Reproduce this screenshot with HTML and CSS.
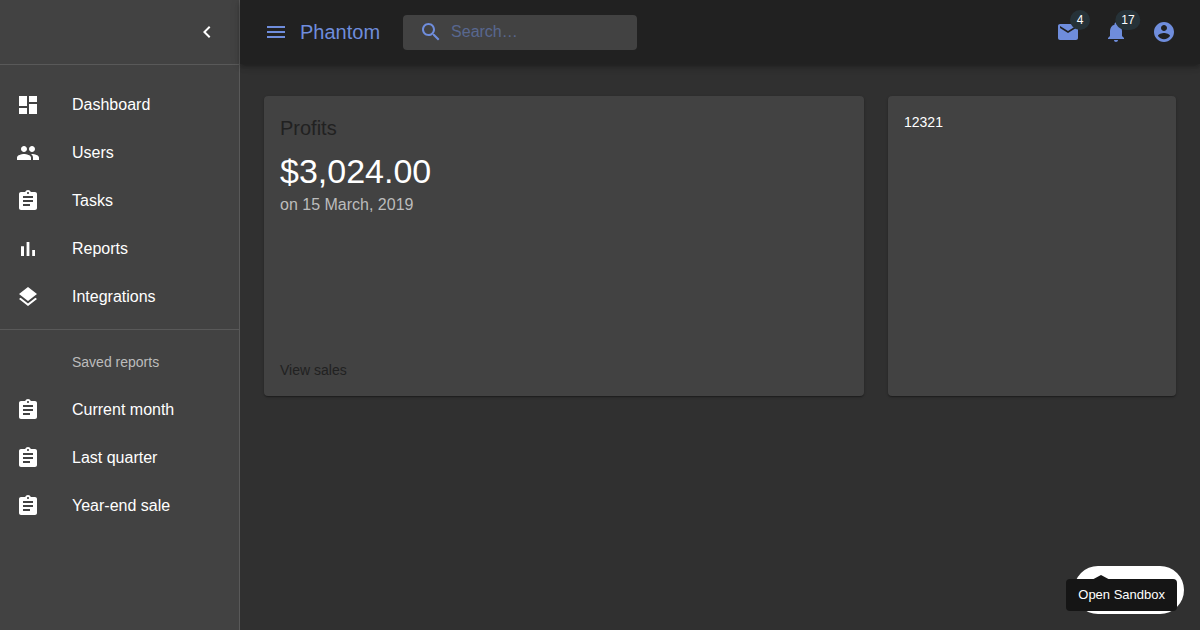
FILE: index.html
```
<!DOCTYPE html>
<html lang="en">
<head>
    <meta charset="UTF-8">
    <meta name="viewport" content="width=device-width, initial-scale=1">
    <title>Phantom</title>
    <link rel="stylesheet" href="styles.css">
</head>
<body>
    <!-- Shared icons -->
    <svg class="sprite" aria-hidden="true">
        <symbol id="assignment" viewBox="0 0 24 24">
            <path d="M19 3h-4.180C14.400 1.840 13.300 1 12 1c-1.300 0-2.400.840-2.820 2H5c-1.100 0-2 .900-2 2v14c0 1.100.900 2 2 2h14c1.100 0 2-.900 2-2V5c0-1.100-.900-2-2-2zm-7 0c.550 0 1 .450 1 1s-.450 1-1 1-1-.450-1-1 .450-1 1-1zm2 14H7v-2h7v2zm3-4H7v-2h10v2zm0-4H7V7h10v2z"/>
        </symbol>
    </svg>

    <div class="layout">
        <aside class="sidebar">
            <div class="sidebar-header">
                <button class="icon-button" type="button" aria-label="Close menu">
                    <svg class="icon" viewBox="0 0 24 24"><path d="M15.410 7.410L14 6l-6 6 6 6 1.410-1.410L10.830 12z"/></svg>
                </button>
            </div>
            <nav class="menu">
                <a class="menu-item" href="#">
                    <svg class="icon" viewBox="0 0 24 24"><path d="M3 13h8V3H3v10zm0 8h8v-6H3v6zm10 0h8V11h-8v10zm0-18v6h8V3h-8z"/></svg>
                    <span>Dashboard</span>
                </a>
                <a class="menu-item" href="#">
                    <svg class="icon" viewBox="0 0 24 24"><path d="M16 11c1.660 0 2.990-1.340 2.990-3S17.660 5 16 5c-1.660 0-3 1.340-3 3s1.340 3 3 3zm-8 0c1.660 0 2.990-1.340 2.990-3S9.660 5 8 5C6.340 5 5 6.340 5 8s1.340 3 3 3zm0 2c-2.330 0-7 1.170-7 3.500V19h14v-2.500c0-2.330-4.670-3.500-7-3.500zm8 0c-.290 0-.620.020-.970.050 1.160.840 1.970 1.970 1.970 3.450V19h6v-2.500c0-2.330-4.670-3.500-7-3.500z"/></svg>
                    <span>Users</span>
                </a>
                <a class="menu-item" href="#">
                    <svg class="icon"><use href="#assignment"/></svg>
                    <span>Tasks</span>
                </a>
                <a class="menu-item" href="#">
                    <svg class="icon" viewBox="0 0 24 24"><path d="M5 9.200h3V19H5zM10.600 5h2.800v14h-2.800zm5.600 8H19v6h-2.800z"/></svg>
                    <span>Reports</span>
                </a>
                <a class="menu-item" href="#">
                    <svg class="icon" viewBox="0 0 24 24"><path d="M11.990 18.540l-7.370-5.730L3 14.070l9 7 9-7-1.630-1.270-7.380 5.740zM12 16l7.360-5.730L21 9l-9-7-9 7 1.630 1.270L12 16z"/></svg>
                    <span>Integrations</span>
                </a>
            </nav>
            <nav class="menu menu-saved">
                <h2 class="menu-title">Saved reports</h2>
                <a class="menu-item" href="#">
                    <svg class="icon"><use href="#assignment"/></svg>
                    <span>Current month</span>
                </a>
                <a class="menu-item" href="#">
                    <svg class="icon"><use href="#assignment"/></svg>
                    <span>Last quarter</span>
                </a>
                <a class="menu-item" href="#">
                    <svg class="icon"><use href="#assignment"/></svg>
                    <span>Year-end sale</span>
                </a>
            </nav>
        </aside>

        <div class="page">
            <header class="topbar">
                <button class="icon-button" type="button" aria-label="Open menu">
                    <svg class="icon" viewBox="0 0 24 24"><path d="M3 18h18v-2H3v2zm0-5h18v-2H3v2zm0-7v2h18V6H3z"/></svg>
                </button>
                <h1 class="brand">Phantom</h1>
                <label class="search">
                    <svg class="icon" viewBox="0 0 24 24"><path d="M15.500 14h-.790l-.280-.270C15.410 12.590 16 11.110 16 9.500 16 5.910 13.090 3 9.500 3S3 5.910 3 9.500 5.910 16 9.500 16c1.610 0 3.090-.590 4.230-1.570l.270.280v.790l5 4.990L20.490 19l-4.990-5zm-6 0C7.010 14 5 11.990 5 9.500S7.010 5 9.500 5 14 7.010 14 9.500 11.990 14 9.500 14z"/></svg>
                    <input class="search-input" type="text" placeholder="Search…" aria-label="Search">
                </label>
                <div class="actions">
                    <button class="icon-button" type="button" aria-label="4 new mails">
                        <svg class="icon" viewBox="0 0 24 24"><path d="M20 4H4c-1.100 0-1.990.900-1.990 2L2 18c0 1.100.900 2 2 2h16c1.100 0 2-.900 2-2V6c0-1.100-.900-2-2-2zm0 4l-8 5-8-5V6l8 5 8-5v2z"/></svg>
                        <span class="badge">4</span>
                    </button>
                    <button class="icon-button" type="button" aria-label="17 new notifications">
                        <svg class="icon" viewBox="0 0 24 24"><path d="M12 22c1.100 0 2-.900 2-2h-4c0 1.100.890 2 2 2zm6-6v-5c0-3.070-1.640-5.640-4.500-6.320V4c0-.830-.670-1.500-1.500-1.500s-1.500.670-1.500 1.500v.680C7.630 5.360 6 7.920 6 11v5l-2 2v1h16v-1l-2-2z"/></svg>
                        <span class="badge">17</span>
                    </button>
                    <button class="icon-button" type="button" aria-label="Account">
                        <svg class="icon" viewBox="0 0 24 24"><path d="M12 2C6.480 2 2 6.480 2 12s4.480 10 10 10 10-4.480 10-10S17.520 2 12 2zm0 3c1.660 0 3 1.340 3 3s-1.340 3-3 3-3-1.340-3-3 1.340-3 3-3zm0 14.200c-2.500 0-4.710-1.280-6-3.220.030-1.990 4-3.080 6-3.080 1.990 0 5.970 1.090 6 3.080-1.290 1.940-3.500 3.220-6 3.220z"/></svg>
                    </button>
                </div>
            </header>

            <main class="content">
                <section class="card card-wide">
                    <h2 class="card-title">Profits</h2>
                    <p class="amount">$3,024.00</p>
                    <p class="date">on 15 March, 2019</p>
                    <a class="card-link" href="#">View sales</a>
                </section>
                <section class="card card-narrow">12321</section>
            </main>
        </div>
    </div>

    <div class="sandbox">
        <button class="sandbox-button" type="button" aria-describedby="sandbox-tip" aria-label="Open Sandbox">
            <svg class="sandbox-logo" viewBox="0 0 26 30"><path d="M13 0l13 7v16l-13 7-13-7V7zm0 5L5 9l8 5 8-5zM3 12v9l8 5v-9zm20 0l-8 5v9l8-5z"/></svg>
        </button>
        <div class="tooltip" id="sandbox-tip" role="tooltip">Open Sandbox</div>
    </div>
</body>
</html>
```
FILE: styles.css
```
* {
    box-sizing: border-box;
}

body {
    margin: 0;
    background: #303030;
    color: #fff;
    font-family: "Liberation Sans", Arial, sans-serif;
    font-size: 14px;
    line-height: 20px;
}

h1, h2, p {
    margin: 0;
    font-weight: normal;
}

a {
    color: inherit;
    text-decoration: none;
}

.sprite {
    display: none;
}

.icon {
    display: block;
    flex: none;
    width: 24px;
    height: 24px;
    fill: currentColor;
}

.icon-button {
    position: relative;
    padding: 12px;
    border: 0;
    background: none;
    color: inherit;
    font: inherit;
    cursor: pointer;
}

.layout {
    display: flex;
    min-height: 100vh;
}

/* Sidebar */
.sidebar {
    flex: none;
    width: 240px;
    background: #424242;
    border-right: 1px solid #595959;
}

.sidebar-header {
    display: flex;
    align-items: center;
    justify-content: flex-end;
    height: 65px;
    padding: 0 8px;
    border-bottom: 1px solid #595959;
}

.menu {
    padding: 16px 0 8px;
}

.menu-saved {
    padding-top: 8px;
    border-top: 1px solid #595959;
}

.menu-item {
    display: flex;
    align-items: center;
    gap: 32px;
    height: 48px;
    padding: 0 16px;
    font-size: 16px;
}

.menu-title {
    padding-left: 72px;
    color: #bcbcbc;
    font-size: 14px;
    line-height: 48px;
}

/* Top bar */
.page {
    flex: 1;
    min-width: 0;
}

.topbar {
    position: relative;
    display: flex;
    align-items: center;
    height: 64px;
    padding: 0 12px;
    background: #212121;
    color: #6f8ddc;
    box-shadow: 0 2px 4px -1px rgba(0, 0, 0, 0.2), 0 4px 5px rgba(0, 0, 0, 0.14), 0 1px 10px rgba(0, 0, 0, 0.12);
}

.brand {
    font-size: 20px;
    line-height: 32px;
}

.search {
    display: flex;
    align-items: center;
    gap: 8px;
    width: 234px;
    height: 35px;
    margin-left: 23px;
    padding: 0 16px;
    border-radius: 4px;
    background: #424242;
}

.search-input {
    flex: 1;
    min-width: 0;
    padding: 0;
    border: 0;
    outline: 0;
    background: none;
    color: inherit;
    font: inherit;
    font-size: 16px;
}

.search-input::placeholder {
    color: #6f8ddc;
    opacity: 0.5;
}

.actions {
    display: flex;
    margin-left: auto;
}

/* Centered on the top right corner of the icon */
.badge {
    position: absolute;
    top: 12px;
    left: 36px;
    min-width: 20px;
    padding: 0 6px;
    border-radius: 10px;
    background: #263238;
    color: #fff;
    font-size: 12px;
    line-height: 20px;
    text-align: center;
    transform: translate(-50%, -50%);
}

/* Cards */
.content {
    display: grid;
    grid-template-columns: repeat(12, 1fr);
    gap: 24px;
    padding: 32px 24px;
}

.card {
    display: flex;
    flex-direction: column;
    min-height: 300px;
    padding: 16px;
    border-radius: 4px;
    background: #424242;
    box-shadow: 0 1px 3px rgba(0, 0, 0, 0.2), 0 1px 1px rgba(0, 0, 0, 0.14), 0 2px 1px -1px rgba(0, 0, 0, 0.12);
}

.card-wide {
    grid-column: span 8;
}

.card-narrow {
    grid-column: span 4;
}

.card-title {
    margin-bottom: 5px;
    color: #212121;
    font-size: 20px;
    line-height: 32px;
}

.amount {
    font-size: 34px;
    line-height: 44px;
}

.date {
    color: #bcbcbc;
    font-size: 16px;
    line-height: 24px;
}

.card-link {
    margin-top: auto;
    color: #212121;
}

/* Floating sandbox button */
.sandbox {
    position: fixed;
    right: 16px;
    bottom: 16px;
}

.sandbox-button {
    display: flex;
    align-items: center;
    width: 110px;
    height: 48px;
    padding: 0 14px;
    border: 0;
    border-radius: 24px;
    background: #fff;
    cursor: pointer;
}

.sandbox-logo {
    width: 26px;
    height: 30px;
    fill: #151515;
}

.tooltip {
    position: absolute;
    right: 7px;
    bottom: 3px;
    padding: 6px 12px;
    border-radius: 4px;
    background: #151515;
    font-size: 13px;
    white-space: nowrap;
}
```
